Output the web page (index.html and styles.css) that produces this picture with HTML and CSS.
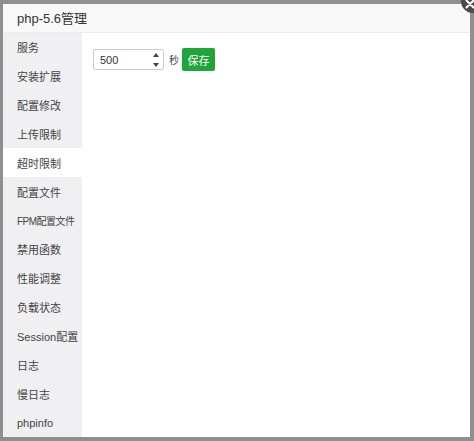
FILE: index.html
```html
<!DOCTYPE html>
<html lang="zh">
<head>
<meta charset="utf-8">
<link rel="stylesheet" href="styles.css">
</head>
<body>
<div class="stage">
  <div class="dialog">
    <div class="header">php-5.6管理</div>
    <div class="body">
      <ul class="side">
        <li>服务</li>
        <li>安装扩展</li>
        <li>配置修改</li>
        <li>上传限制</li>
        <li class="active">超时限制</li>
        <li>配置文件</li>
        <li class="tight">FPM配置文件</li>
        <li>禁用函数</li>
        <li>性能调整</li>
        <li>负载状态</li>
        <li>Session配置</li>
        <li>日志</li>
        <li>慢日志</li>
        <li>phpinfo</li>
      </ul>
      <div class="main">
        <div class="row">
          <div class="num">
            <span class="val">500</span>
            <span class="spin"><svg width="6" height="14" viewBox="0 0 6 14"><path d="M0 4 L3 0 L6 4Z" fill="#444"/><path d="M0 10 L3 14 L6 10Z" fill="#444"/></svg></span>
          </div>
          <span class="unit">秒</span>
          <button class="btn">保存</button>
        </div>
      </div>
    </div>
  </div>
  <div class="close"><svg width="10" height="10" viewBox="0 0 10 10"><path d="M1.5 1.5 L8.5 8.5 M8.5 1.5 L1.5 8.5" stroke="#fff" stroke-width="2" stroke-linecap="round"/></svg></div>
</div>
</body>
</html>
```
FILE: styles.css
```css
* { box-sizing: border-box; }
html {
  margin: 0;
  padding: 0;
  overflow: hidden;
  background: #8f8f8f;
}
body {
  margin: 0;
  padding: 0;
  font-family: "Liberation Sans", Arial, "Noto Sans CJK SC", sans-serif;
  width: 474px;
  height: 441px;
}
.stage {
  position: relative;
  width: 474px;
  height: 441px;
  padding: 4px 4px 0 3px;
}
.dialog {
  width: 467px;
  height: 433px;
  background: #fff;
  display: flex;
  flex-direction: column;
}
.header {
  height: 29px;
  flex: none;
  background: #f8f8f8;
  border-bottom: 1px solid #ececec;
  padding-left: 14px;
  font-size: 13px;
  line-height: 29px;
  color: #333;
}
.body {
  flex: 1;
  display: flex;
}
.side {
  list-style: none;
  margin: 0;
  padding: 0;
  width: 79px;
  background: #f0f0f2;
  display: flex;
  flex-direction: column;
}
.side li {
  flex: 1;
  display: flex;
  align-items: center;
  padding-left: 14px;
  font-size: 11px;
  color: #444;
  white-space: nowrap;
}
.side li.tight {
  font-size: 10px;
  letter-spacing: -0.5px;
}
.side li.active {
  background: #fff;
}
.main {
  flex: 1;
  padding: 15px 11px;
}
.row {
  display: flex;
  align-items: center;
}
.num {
  width: 71px;
  height: 21px;
  border: 1px solid #ccc;
  border-radius: 2px;
  display: flex;
  align-items: center;
  justify-content: space-between;
  padding: 0 4px 0 6px;
  font-size: 11px;
  color: #333;
}
.spin {
  display: flex;
  align-items: center;
}
.spin svg { display: block; }
.unit {
  margin-left: 5px;
  font-size: 10px;
  color: #444;
}
.btn {
  margin-left: 3px;
  width: 33px;
  height: 23px;
  border: none;
  border-radius: 2px;
  background: #20a53a;
  color: #fff;
  font-family: inherit;
  font-size: 11px;
  padding: 0;
}
.close {
  position: absolute;
  left: 461px;
  top: -11px;
  width: 24px;
  height: 24px;
  border-radius: 50%;
  background: #4a4a4a;
  z-index: 10;
  display: flex;
  align-items: center;
  justify-content: center;
}
.close svg {
  display: block;
  margin: 6px 6px 0 0;
}
```
